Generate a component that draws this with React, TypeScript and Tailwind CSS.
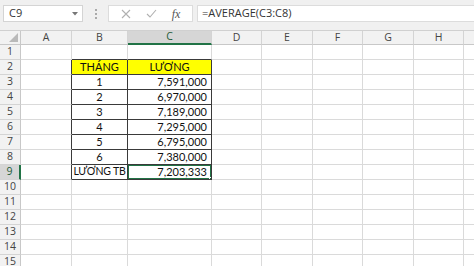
import React from "react";

const cols = [
  { k: "A", w: "w-[51px]" },
  { k: "B", w: "w-[56px]" },
  { k: "C", w: "w-[84px]" },
  { k: "D", w: "w-[50px]" },
  { k: "E", w: "w-[51px]" },
  { k: "F", w: "w-[50px]" },
  { k: "G", w: "w-[51px]" },
  { k: "H", w: "w-[50px]" },
];

const data: Record<number, [string, string]> = {
  2: ["THÁNG", "LƯƠNG"],
  3: ["1", "7,591,000"],
  4: ["2", "6,970,000"],
  5: ["3", "7,189,000"],
  6: ["4", "7,295,000"],
  7: ["5", "6,795,000"],
  8: ["6", "7,380,000"],
  9: ["LƯƠNG TB", "7,203,333"],
};

const rows = Array.from({ length: 15 }, (_, i) => i + 1);

function Cell({ col, row }: { col: string; row: number }) {
  const inTable = row >= 2 && row <= 9;
  const d = data[row];
  let cls = "h-full shrink-0 border-r border-b border-[#dadada] flex items-center px-[4px] overflow-hidden whitespace-nowrap";
  if (col === "A" && inTable) cls += " !border-r-[#3a3a3a]";
  if ((col === "B" || col === "C") && row === 1) cls += " !border-b-[#3a3a3a]";
  if ((col === "B" || col === "C") && inTable) cls += " !border-r-[#3a3a3a] !border-b-[#3a3a3a]";
  if ((col === "B" || col === "C") && row === 2) cls += " bg-[#ffff00]";
  if (col === "B") cls += " justify-center px-[1px]";
  if (col === "C") cls += row === 2 ? " justify-center" : " justify-end";
  if (col === "B" && row === 9) cls += " tracking-[-0.2px] text-[10.5px]";
  const w = cols.find((c) => c.k === col)!.w;
  const text = d && (col === "B" ? d[0] : col === "C" ? d[1] : "");
  return (
    <div className={`${cls} ${w} relative`}>
      {text}
      {col === "C" && row === 9 && (
        <div className="absolute -left-[1px] -top-[1px] w-[85px] h-[16px] border-2 border-[#217346]">
          <div className="absolute -right-[3px] -bottom-[3px] w-[4px] h-[4px] bg-[#217346] border border-white" />
        </div>
      )}
    </div>
  );
}

export default function App() {
  return (
    <div className="w-[474px] h-[266px] overflow-hidden bg-white text-[11px] text-[#111] font-['Lato','Liberation_Sans',sans-serif]">
      {/* formula bar */}
      <div className="h-[30px] bg-[#f0f0f0] flex items-start pt-[5px] pl-[3px] gap-0">
        <div className="w-[80px] h-[17px] bg-white border border-[#d4d4d4] flex items-center justify-between pl-[5px] pr-[4px] text-[#333] font-['Open_Sans','Liberation_Sans',sans-serif]">
          <span>C9</span>
          <svg width="6" height="4" viewBox="0 0 6 4"><path d="M0 0h6L3 3.5z" fill="#777" /></svg>
        </div>
        <div className="w-[25px] h-[17px] flex flex-col items-center justify-center gap-[2px]">
          <span className="w-[2px] h-[2px] bg-[#aaa]" />
          <span className="w-[2px] h-[2px] bg-[#aaa]" />
          <span className="w-[2px] h-[2px] bg-[#aaa]" />
        </div>
        <div className="w-[85px] h-[17px] bg-white border border-[#dcdcdc] flex items-center justify-around px-[4px]">
          <svg width="10" height="10" viewBox="0 0 10 10"><path d="M1 1l8 8M9 1l-8 8" stroke="#b0b0b0" strokeWidth="1.1" /></svg>
          <svg width="11" height="9" viewBox="0 0 11 9"><path d="M1 5l3 3 6-7" stroke="#b0b0b0" strokeWidth="1.1" fill="none" /></svg>
          <span className="font-['Liberation_Serif',serif] italic text-[12px] text-[#555] leading-none">fx</span>
        </div>
        <div className="ml-[4px] flex-1 h-[17px] bg-white border border-[#dcdcdc] border-r-0 flex items-center pl-[4px] text-[#333] font-['Open_Sans','Liberation_Sans',sans-serif] text-[11px]">
          =AVERAGE(C3:C8)
        </div>
      </div>
      {/* column headers */}
      <div className="h-[15px] flex bg-[#f2f2f2] border-t border-[#d0d0d0] text-[#444] font-['Open_Sans','Liberation_Sans',sans-serif] text-[10.5px]">
        <div className="w-[21px] h-full shrink-0 border-r border-b border-[#c8c8c8] flex items-end justify-end pr-[2px] pb-[2px]">
          <svg width="9" height="9" viewBox="0 0 9 9"><path d="M9 0v9H0z" fill="#b9b9b9" /></svg>
        </div>
        {cols.map((c) => (
          <div
            key={c.k}
            className={`${c.w} h-full shrink-0 border-r border-[#d4d4d4] flex items-center justify-center ${
              c.k === "C" ? "bg-[#d6d6d6] border-b-2 border-b-[#217346] text-[#1e5c39]" : "border-b border-b-[#c8c8c8]"
            }`}
          >
            {c.k}
          </div>
        ))}
        <div className="flex-1 h-full border-b border-[#c8c8c8]" />
      </div>
      {/* rows */}
      {rows.map((r) => (
        <div key={r} className="h-[15px] flex">
          <div
            className={`w-[21px] h-full shrink-0 border-b border-[#d4d4d4] flex items-center justify-center font-['Open_Sans','Liberation_Sans',sans-serif] text-[10.5px] ${
              r === 9 ? "bg-[#d6d6d6] border-r-2 border-r-[#217346] text-[#1e5c39]" : "bg-[#f2f2f2] border-r border-r-[#c8c8c8] text-[#444]"
            }`}
          >
            {r}
          </div>
          {cols.map((c) => (
            <Cell key={c.k} col={c.k} row={r} />
          ))}
          <div className="flex-1 h-full border-b border-[#dadada]" />
        </div>
      ))}
    </div>
  );
}
